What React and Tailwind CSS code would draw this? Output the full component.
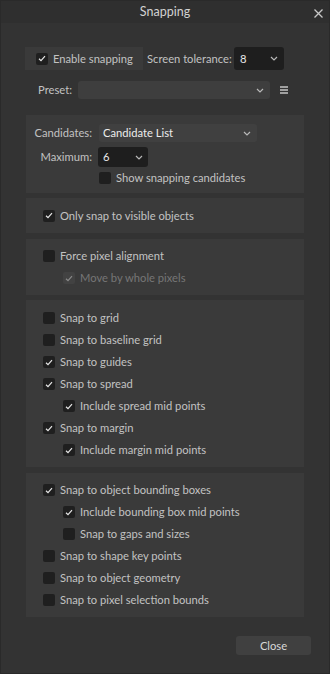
const Chevron = ({ className = "" }) => (
  <svg width="8" height="5" viewBox="0 0 8 5" className={className}>
    <path d="M1 1 L4 4 L7 1" fill="none" stroke="#b8b8b8" strokeWidth="1.2" />
  </svg>
);

const Check = ({ checked, disabled }) => (
  <span
    className={`w-3 h-3 rounded-[2px] shrink-0 flex items-center justify-center ${
      disabled ? "bg-[#424242]" : "bg-[#1f1f1f]"
    }`}
  >
    {checked && (
      <svg width="8" height="7" viewBox="0 0 8 7">
        <path
          d="M1 3.8 L3 5.6 L7 1.2"
          fill="none"
          stroke={disabled ? "#8a8a8a" : "#e8e8e8"}
          strokeWidth="1.2"
        />
      </svg>
    )}
  </span>
);

const Row = ({ label, checked, indent, disabled }) => (
  <div className={`h-[22px] flex items-center gap-[5px] ${indent ? "pl-[37px]" : "pl-[17px]"}`}>
    <Check checked={checked} disabled={disabled} />
    <span className={disabled ? "text-[#767676]" : "text-[#c2c2c2]"}>{label}</span>
  </div>
);

const Panel = ({ children, className = "" }) => (
  <div className={`bg-[#3a3a3a] ${className}`}>{children}</div>
);

export default function App() {
  return (
    <div
      className="w-[330px] h-[674px] bg-[#333333] border border-[#2a2a2a] flex flex-col text-[11.2px] leading-none text-[#c2c2c2] whitespace-nowrap"
      style={{ fontFamily: "Lato, 'Noto Sans', sans-serif" }}
    >
      {/* Title bar */}
      <div className="h-[22px] bg-[#2f2f2f] flex items-center justify-center relative shrink-0">
        <span className="text-[12.5px] text-[#d2d2d2]">Snapping</span>
        <svg width="9" height="9" viewBox="0 0 9 9" className="absolute right-[6px] top-[8px]">
          <path d="M0.5 0.5 L8.5 8.5 M8.5 0.5 L0.5 8.5" stroke="#c8c8c8" strokeWidth="1.3" />
        </svg>
      </div>

      <div className="flex flex-col px-[24px]">
        {/* Enable row */}
        <div className="mt-[24px] flex items-center h-[23px]">
          <div className="h-[23px] w-[118px] shrink-0 bg-[#3a3a3a] flex items-center gap-[5px] pl-[11px]">
            <Check checked />
            <span>Enable snapping</span>
          </div>
          <span className="ml-[4px] w-[83px] shrink-0">Screen tolerance:</span>
          <div className="ml-[4px] w-[50px] shrink-0 h-[23px] bg-[#1e1e1e] rounded-[3px] flex items-center justify-between px-[6px]">
            <span className="text-[#e8e8e8]">8</span>
            <Chevron />
          </div>
        </div>

        {/* Preset row */}
        <div className="mt-[11px] flex items-center h-[18px]">
          <span className="w-[47px] text-right">Preset:</span>
          <div className="ml-[6px] w-[192px] h-[18px] bg-[#3e3e3e] rounded-[3px] flex items-center justify-end pr-[6px]">
            <Chevron />
          </div>
          <div className="ml-[10px] flex flex-col gap-[1px]">
            <span className="w-[8px] h-[2px] bg-[#a0a0a0]" />
            <span className="w-[8px] h-[2px] bg-[#a0a0a0]" />
            <span className="w-[8px] h-[2px] bg-[#a0a0a0]" />
          </div>
        </div>

        <div className="flex flex-col mx-[1px]">
          {/* Candidates panel */}
          <Panel className="mt-[16px] h-[78px] pt-[9px]">
            <div className="flex items-center h-[18px]">
              <span className="w-[66px] text-right">Candidates:</span>
              <div className="ml-[7px] w-[158px] h-[18px] bg-[#404040] rounded-[3px] flex items-center justify-between pl-[4px] pr-[6px]">
                <span className="text-[#ececec]">Candidate List</span>
                <Chevron />
              </div>
            </div>
            <div className="flex items-center h-[20px] mt-[5px]">
              <span className="w-[66px] text-right">Maximum:</span>
              <div className="ml-[6px] w-[50px] h-[20px] bg-[#1e1e1e] rounded-[3px] flex items-center justify-between px-[5px]">
                <span className="text-[#e8e8e8]">6</span>
                <Chevron />
              </div>
            </div>
            <div className="flex items-center h-[16px] mt-[3px] pl-[73px] gap-[5px]">
              <Check />
              <span>Show snapping candidates</span>
            </div>
          </Panel>

          <Panel className="mt-[5px] h-[35px] flex flex-col justify-center">
            <Row label="Only snap to visible objects" checked />
          </Panel>

          <Panel className="mt-[6px] py-[6px]">
            <Row label="Force pixel alignment" />
            <Row label="Move by whole pixels" checked indent disabled />
          </Panel>

          <Panel className="mt-[5px] pt-[7px] pb-[6px]">
            <Row label="Snap to grid" />
            <Row label="Snap to baseline grid" />
            <Row label="Snap to guides" checked />
            <Row label="Snap to spread" checked />
            <Row label="Include spread mid points" checked indent />
            <Row label="Snap to margin" checked />
            <Row label="Include margin mid points" checked indent />
          </Panel>

          <Panel className="mt-[6px] py-[6px]">
            <Row label="Snap to object bounding boxes" checked />
            <Row label="Include bounding box mid points" checked indent />
            <Row label="Snap to gaps and sizes" indent />
            <Row label="Snap to shape key points" />
            <Row label="Snap to object geometry" />
            <Row label="Snap to pixel selection bounds" />
          </Panel>
        </div>

        <div className="mt-[19px] flex justify-end">
          <button className="w-[75px] h-[19px] bg-[#404040] rounded-[3px] text-[#d8d8d8] mr-[-6px]">
            Close
          </button>
        </div>
      </div>
    </div>
  );
}
